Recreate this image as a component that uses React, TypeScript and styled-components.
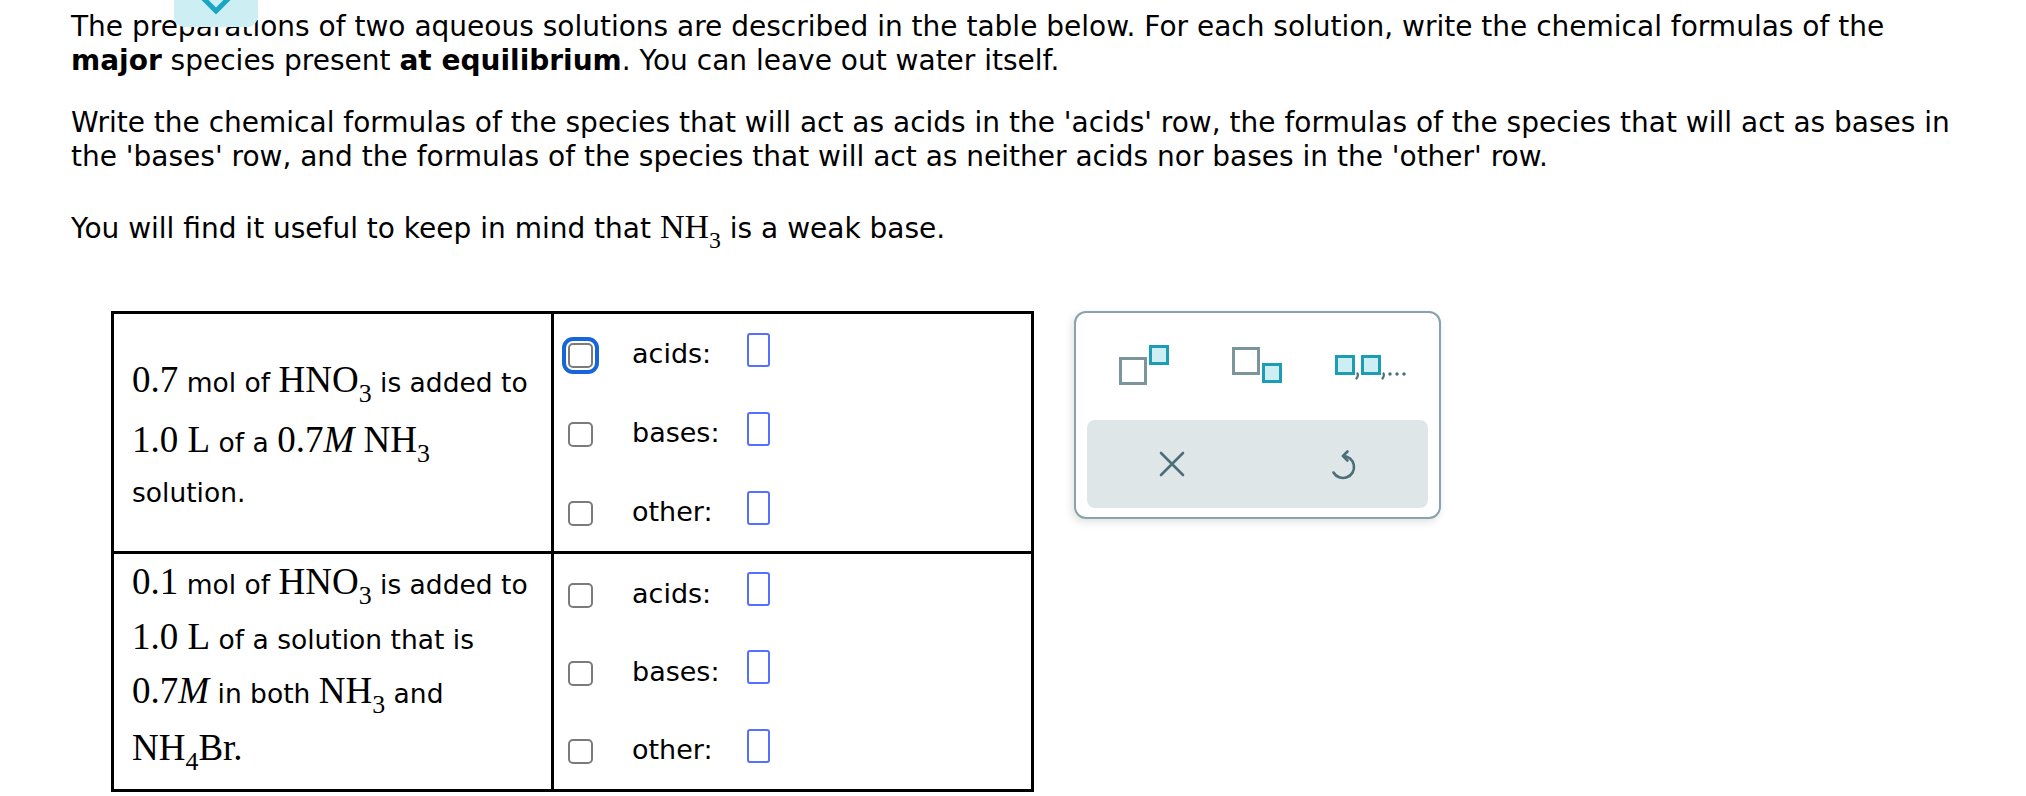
import React from 'react';
import styled, { createGlobalStyle } from 'styled-components';

const GlobalStyle = createGlobalStyle`
  body {
    margin: 0;
    background: #fff;
    color: #000;
    font-family: "DejaVu Sans", Verdana, sans-serif;
  }
`;

const Page = styled.div`
  position: relative;
  padding: 10px 51px 40px 71px;
`;

const TopTab = styled.div`
  position: absolute;
  left: 174px;
  top: 0;
  width: 84px;
  height: 27px;
  background: #cdeef3;
  border-radius: 0 0 11px 11px;
  display: flex;
  justify-content: center;
`;

const Intro = styled.div`
  display: flex;
  flex-direction: column;
  gap: 28px;
`;

const Para = styled.p`
  margin: 0;
  font-size: 28px;
  line-height: 34px;
`;

const Hint = styled(Para)`
  padding-top: 8px;
`;

const Math = styled.span<{ $size: number }>`
  font-family: "Liberation Serif", "Times New Roman", serif;
  font-size: ${(p) => p.$size}px;
  line-height: 1;
  white-space: nowrap;
`;

const Sub = styled.span`
  font-size: 0.7em;
  position: relative;
  top: 0.4em;
  line-height: 0;
`;

const Workspace = styled.div`
  display: flex;
  align-items: flex-start;
  gap: 40px;
  margin-top: 65px;
  padding-left: 40px;
`;

const Table = styled.div`
  display: grid;
  grid-template-columns: 440px 477px;
  grid-template-rows: 240px 235px;
  border: 3px solid #000;
`;

const Description = styled.div<{ $last?: boolean }>`
  display: flex;
  flex-direction: column;
  justify-content: center;
  padding: 0 8px 0 18px;
  border-right: 3px solid #000;
  border-bottom: ${(p) => (p.$last ? 'none' : '3px solid #000')};
  font-size: 26.5px;
`;

const Line = styled.div<{ $h: number }>`
  height: ${(p) => p.$h}px;
  line-height: ${(p) => p.$h}px;
  white-space: nowrap;
`;

const Choices = styled.div<{ $last?: boolean }>`
  display: flex;
  flex-direction: column;
  justify-content: center;
  padding-left: 14px;
  border-bottom: ${(p) => (p.$last ? 'none' : '3px solid #000')};
`;

const ChoiceRow = styled.div`
  display: flex;
  align-items: center;
  height: 80px;
`;

const Checkbox = styled.span<{ $focused?: boolean }>`
  box-sizing: border-box;
  width: 25px;
  height: 25px;
  margin-top: 4px;
  border: 2px solid #7b7b7b;
  border-radius: 5px;
  outline: ${(p) => (p.$focused ? '4px solid #1765d8' : 'none')};
  outline-offset: 2px;
`;

const Label = styled.span`
  width: 115px;
  margin-left: 39px;
  font-size: 27px;
`;

const AnswerBox = styled.span`
  box-sizing: border-box;
  width: 23px;
  height: 34px;
  margin-bottom: 8px;
  border: 2px solid #5470ff;
  border-radius: 3px;
`;

const Panel = styled.div`
  width: 367px;
  box-sizing: border-box;
  border: 2px solid #88a3aa;
  border-radius: 12px;
  padding: 0 11px 9px;
  background: #fff;
  box-shadow: -2px 3px 8px rgba(0, 0, 0, 0.12);
`;

const TemplateRow = styled.div`
  display: grid;
  grid-template-columns: repeat(3, 1fr);
  align-items: center;
  justify-items: center;
  height: 107px;
  padding-bottom: 4px;
  box-sizing: border-box;
`;

const ActionBar = styled.div`
  display: grid;
  grid-template-columns: 1fr 1fr;
  align-items: center;
  justify-items: center;
  height: 88px;
  background: #dfe6e8;
  border-radius: 8px;
`;

const GRAY = '#7a959c';
const TEAL = '#1a9db5';
const FILL = '#cdeef3';
const INK = '#4b6e78';

const SuperscriptIcon = () => (
  <svg width="50" height="40" viewBox="0 0 50 40">
    <rect x="1.5" y="13.5" width="25" height="25" fill="#fff" stroke={GRAY} strokeWidth="3" />
    <rect x="31.5" y="1.5" width="17" height="17" fill={FILL} stroke={TEAL} strokeWidth="3" />
  </svg>
);

const SubscriptIcon = () => (
  <svg width="50" height="36" viewBox="0 0 50 36">
    <rect x="1.5" y="1.5" width="25" height="25" fill="#fff" stroke={GRAY} strokeWidth="3" />
    <rect x="31.5" y="17.5" width="17" height="17" fill={FILL} stroke={TEAL} strokeWidth="3" />
  </svg>
);

const ListIcon = () => (
  <svg width="72" height="30" viewBox="0 0 72 30">
    <rect x="1.5" y="6.5" width="17" height="17" fill={FILL} stroke={TEAL} strokeWidth="3" />
    <path d="M22.5 23.5 q1 2.5 -1 5" fill="none" stroke={INK} strokeWidth="2.2" strokeLinecap="round" />
    <rect x="27.5" y="6.5" width="17" height="17" fill={FILL} stroke={TEAL} strokeWidth="3" />
    <path d="M48.5 23.5 q1 2.5 -1 5" fill="none" stroke={INK} strokeWidth="2.2" strokeLinecap="round" />
    <circle cx="55" cy="24" r="1.7" fill={INK} />
    <circle cx="62" cy="24" r="1.7" fill={INK} />
    <circle cx="69" cy="24" r="1.7" fill={INK} />
  </svg>
);

const ClearIcon = () => (
  <svg width="26" height="26" viewBox="0 0 26 26">
    <path d="M2 2 L24 24 M24 2 L2 24" stroke={INK} strokeWidth="2.6" strokeLinecap="round" />
  </svg>
);

const UndoIcon = () => (
  <svg width="30" height="36" viewBox="0 0 30 36">
    <path d="M15 10 A11 11 0 1 1 5.5 26.5" fill="none" stroke={INK} strokeWidth="2.6" strokeLinecap="round" />
    <path
      d="M19.5 5.5 L15 10 L19.5 14.5"
      fill="none"
      stroke={INK}
      strokeWidth="2.6"
      strokeLinecap="round"
      strokeLinejoin="round"
    />
  </svg>
);

const Chevron = () => (
  <svg width="34" height="14" viewBox="0 0 34 14">
    <path d="M3 -3 L17 11 L31 -3" fill="none" stroke="#1aa6c3" strokeWidth="5" />
  </svg>
);

const kinds = ['acids', 'bases', 'other'];

const ChoiceList = ({ last, focusFirst }: { last?: boolean; focusFirst?: boolean }) => (
  <Choices $last={last}>
    {kinds.map((k, i) => (
      <ChoiceRow key={k}>
        <Checkbox $focused={focusFirst && i === 0} />
        <Label>{k}:</Label>
        <AnswerBox />
      </ChoiceRow>
    ))}
  </Choices>
);

const T = 37;

export default function App() {
  return (
    <>
      <GlobalStyle />
      <Page>
        <TopTab>
          <Chevron />
        </TopTab>
        <Intro>
          <Para>
            The preparations of two aqueous solutions are described in the table below. For each
            solution, write the chemical formulas of the <b>major</b> species present{' '}
            <b>at equilibrium</b>. You can leave out water itself.
          </Para>
          <Para>
            Write the chemical formulas of the species that will act as acids in the 'acids' row,
            the formulas of the species that will act as bases in the 'bases' row, and the formulas
            of the species that will act as neither acids nor bases in the 'other' row.
          </Para>
          <Hint>
            You will find it useful to keep in mind that{' '}
            <Math $size={34}>
              NH<Sub>3</Sub>
            </Math>{' '}
            is a weak base.
          </Hint>
        </Intro>

        <Workspace>
          <Table>
            <Description>
              <Line $h={62}>
                <Math $size={T}>0.7</Math> mol of{' '}
                <Math $size={T}>
                  HNO<Sub>3</Sub>
                </Math>{' '}
                is added to
              </Line>
              <Line $h={58}>
                <Math $size={T}>1.0 L</Math> of a{' '}
                <Math $size={T}>
                  0.7<i>M</i> NH<Sub>3</Sub>
                </Math>
              </Line>
              <Line $h={42}>solution.</Line>
            </Description>
            <ChoiceList focusFirst />
            <Description $last>
              <Line $h={50}>
                <Math $size={T}>0.1</Math> mol of{' '}
                <Math $size={T}>
                  HNO<Sub>3</Sub>
                </Math>{' '}
                is added to
              </Line>
              <Line $h={60}>
                <Math $size={T}>1.0 L</Math> of a solution that is
              </Line>
              <Line $h={48}>
                <Math $size={T}>
                  0.7<i>M</i>
                </Math>{' '}
                in both{' '}
                <Math $size={T}>
                  NH<Sub>3</Sub>
                </Math>{' '}
                and
              </Line>
              <Line $h={66}>
                <Math $size={T}>
                  NH<Sub>4</Sub>Br.
                </Math>
              </Line>
            </Description>
            <ChoiceList last />
          </Table>

          <Panel>
            <TemplateRow>
              <SuperscriptIcon />
              <SubscriptIcon />
              <ListIcon />
            </TemplateRow>
            <ActionBar>
              <ClearIcon />
              <UndoIcon />
            </ActionBar>
          </Panel>
        </Workspace>
      </Page>
    </>
  );
}
